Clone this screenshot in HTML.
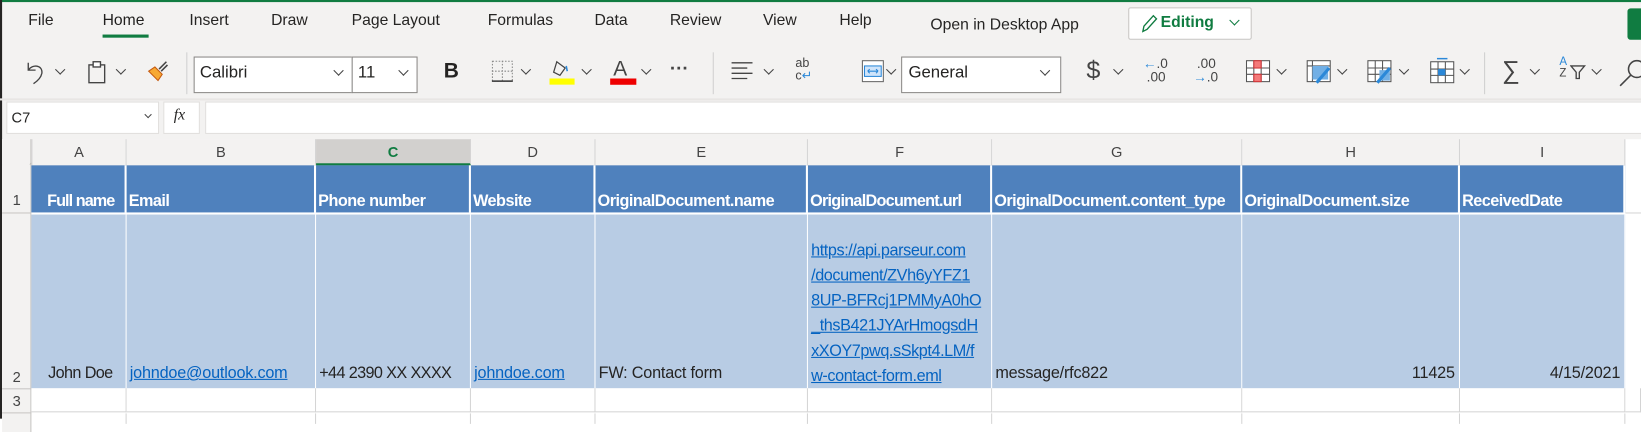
<!DOCTYPE html>
<html><head><meta charset="utf-8"><style>
*{margin:0;padding:0;box-sizing:border-box}
html,body{width:1641px;height:417px;overflow:hidden;background:#fff}
#w{position:absolute;left:0;top:0;width:1568px;height:400px;transform:scale(1.0466);transform-origin:0 0;font-family:"Liberation Sans",sans-serif;color:#252423;background:#f3f2f1}
.a{position:absolute;white-space:nowrap}
.tab{position:absolute;top:11px;font-size:15px;color:#252423}
.chev{position:absolute;width:7px;height:7px;border-right:1.3px solid #444;border-bottom:1.3px solid #444;transform:rotate(45deg)}
.sep{position:absolute;top:50px;width:1px;height:40px;background:#d0d0d0}
.box{position:absolute;background:#fff;border:1px solid #8a8886}
.ch{position:absolute;top:133px;height:25px;font-size:14px;color:#444;text-align:center;line-height:25px;border-right:1px solid #d4d4d4;background:#f3f2f1}
.hd{position:absolute;top:158px;height:45px;background:#4f81bd;color:#fff;font-weight:bold;font-size:15.5px;letter-spacing:-0.5px;padding:0 2px;line-height:70px;overflow:hidden;border-right:2px solid #fff}
.dc{position:absolute;top:205px;height:166px;background:#b8cce4;border-right:1px solid #fff;font-size:15.5px;letter-spacing:-0.2px;padding:0 3px}
.lnk{color:#0563c1;text-decoration:underline}
.r3{position:absolute;top:371px;height:23px;border-right:1px solid #d4d4d4;border-bottom:1px solid #d4d4d4;background:#fff}
.vl{position:absolute;top:395px;width:1px;height:10px;background:#d4d4d4}
</style></head><body><div id="w">
<div class="a" style="left:0;top:0;width:1568px;height:2px;background:#107c41"></div>
<div class="a" style="left:0;top:0;width:2px;height:400px;background:#252423"></div>
<div class="tab" style="left:27px">File</div>
<div class="tab" style="left:98px;color:#201f1e">Home</div>
<div class="a" style="left:98px;top:33px;width:44px;height:3px;background:#107c41"></div>
<div class="tab" style="left:181px">Insert</div>
<div class="tab" style="left:259px">Draw</div>
<div class="tab" style="left:336px">Page Layout</div>
<div class="tab" style="left:466px">Formulas</div>
<div class="tab" style="left:568px">Data</div>
<div class="tab" style="left:640px">Review</div>
<div class="tab" style="left:729px">View</div>
<div class="tab" style="left:802px">Help</div>
<div class="tab" style="left:889px;top:15px">Open in Desktop App</div>
<div class="a" style="left:1078px;top:7px;width:118px;height:31px;background:#fff;border:1px solid #c8c6c4;border-radius:2px"></div>
<svg class="a" style="left:1089px;top:13px" width="18" height="20"><path d="M3 17 L4 12 L13 2 L16 5 L7 15 Z M3 17 L7 15" fill="none" stroke="#107c41" stroke-width="1.3"/></svg>
<div class="a" style="left:1109px;top:13px;font-size:15px;font-weight:bold;color:#107c41">Editing</div>
<div class="chev" style="left:1176px;top:16px;border-color:#107c41"></div>
<div class="a" style="left:1555px;top:8px;width:90px;height:30px;background:#107c41;border-radius:3px"></div>

<svg class="a" style="left:22px;top:56px" width="24" height="26"><path d="M5 4 V11 H12 M5 11 C9 5 19 6 18 14 C17 19 13 22 10 24" fill="none" stroke="#444" stroke-width="1.3"/></svg>
<div class="chev" style="left:54px;top:63px"></div>
<svg class="a" style="left:83px;top:57px" width="20" height="24"><rect x="2" y="5" width="15" height="17" fill="none" stroke="#444" stroke-width="1.3"/><rect x="6" y="2" width="7" height="5" fill="#fff" stroke="#444" stroke-width="1.3"/></svg>
<div class="chev" style="left:112px;top:63px"></div>
<svg class="a" style="left:139px;top:56px" width="24" height="24"><path d="M3 12 L12 21 L16 15 L9 8 Z" fill="#f7a933" stroke="#c55a11"/><path d="M13 10 L20 3 M15 12 L21 6" stroke="#444" stroke-width="1.5"/></svg>
<div class="sep" style="left:178px"></div>
<div class="box" style="left:185px;top:54px;width:152px;height:35px"></div>
<div class="a" style="left:191px;top:61px;font-size:16px">Calibri</div>
<div class="chev" style="left:320px;top:64px"></div>
<div class="box" style="left:336px;top:54px;width:63px;height:35px"></div>
<div class="a" style="left:342px;top:61px;font-size:16px">11</div>
<div class="chev" style="left:382px;top:64px"></div>
<div class="a" style="left:424px;top:57px;font-size:20px;font-weight:bold">B</div>
<svg class="a" style="left:469px;top:57px" width="22" height="22"><rect x="1.5" y="1.5" width="19" height="19" fill="none" stroke="#888" stroke-dasharray="1.5 1.5"/><path d="M11 1 V21 M1 11 H21" stroke="#888" stroke-dasharray="1.5 1.5"/><path d="M1 20.5 H21" stroke="#333" stroke-width="1.5"/></svg>
<div class="chev" style="left:499px;top:63px"></div>
<svg class="a" style="left:525px;top:55px" width="26" height="26"><path d="M7 4 L4 14 L10 17 L15 10 Z" fill="none" stroke="#444" stroke-width="1.2"/><path d="M16 8 L17 13" stroke="#2b88d8" stroke-width="1.5"/><rect x="0" y="20" width="24" height="6" fill="#ffff00"/></svg>
<div class="chev" style="left:557px;top:63px"></div>
<div class="a" style="left:586px;top:55px;font-size:20px;color:#444">A</div>
<div class="a" style="left:583px;top:75px;width:25px;height:6px;background:#e00"></div>
<div class="chev" style="left:614px;top:63px"></div>
<div class="a" style="left:640px;top:55px;font-size:18px;font-weight:bold;color:#444">···</div>
<div class="sep" style="left:681px"></div>
<svg class="a" style="left:698px;top:58px" width="24" height="20"><path d="M1 2H21M1 7H16M1 12H21M1 17H16" stroke="#444" stroke-width="1.3"/></svg>
<div class="chev" style="left:731px;top:63px"></div>
<div class="a" style="left:760px;top:54px;font-size:12px;line-height:12px;color:#444">ab<br>c<span style="color:#2b88d8">↵</span></div>
<svg class="a" style="left:823px;top:57px" width="22" height="22"><rect x="1" y="1" width="20" height="20" fill="#fff" stroke="#666"/><rect x="3" y="6" width="16" height="10" fill="#cfe4fa" stroke="#2b88d8"/><path d="M6 11H16M6 11L8 9M6 11L8 13M16 11L14 9M16 11L14 13" stroke="#2b88d8"/></svg>
<div class="chev" style="left:848px;top:63px"></div>
<div class="box" style="left:861px;top:54px;width:153px;height:35px"></div>
<div class="a" style="left:868px;top:61px;font-size:16px">General</div>
<div class="chev" style="left:995px;top:64px"></div>
<div class="a" style="left:1038px;top:54px;font-size:24px;color:#444">$</div>
<div class="chev" style="left:1065px;top:63px"></div>
<div class="a" style="left:1092px;top:54px;font-size:13px;line-height:13px;color:#444"><span style="color:#2b88d8">←</span>.0<br>&nbsp;.00</div>
<div class="a" style="left:1140px;top:54px;font-size:13px;line-height:13px;color:#444">&nbsp;.00<br><span style="color:#2b88d8">→</span>.0</div>
<svg class="a" style="left:1190px;top:57px" width="24" height="22"><rect x="1" y="1" width="22" height="20" fill="#fff" stroke="#555"/><path d="M8 1V21M15 1V21M1 8H23M1 14H23" stroke="#555"/><rect x="8" y="1" width="7" height="7" fill="#f47a7a" stroke="#d13438"/><rect x="8" y="14" width="7" height="7" fill="#f47a7a" stroke="#d13438"/></svg>
<div class="chev" style="left:1221px;top:63px"></div>
<svg class="a" style="left:1248px;top:57px" width="26" height="24"><rect x="1" y="1" width="22" height="20" fill="#fff" stroke="#555"/><path d="M1 6H23M6 1V21" stroke="#555"/><rect x="6" y="6" width="15" height="13" fill="#71afe5"/><path d="M10 22 L22 8" stroke="#2b88d8" stroke-width="3"/></svg>
<div class="chev" style="left:1279px;top:63px"></div>
<svg class="a" style="left:1306px;top:57px" width="26" height="24"><rect x="1" y="1" width="22" height="20" fill="#fff" stroke="#555"/><path d="M8 1V21M15 1V21M1 8H23M1 14H23" stroke="#555"/><rect x="12" y="10" width="10" height="10" fill="#71afe5"/><path d="M10 22 L22 8" stroke="#2b88d8" stroke-width="3"/></svg>
<div class="chev" style="left:1338px;top:63px"></div>
<svg class="a" style="left:1366px;top:55px" width="24" height="26"><rect x="1" y="4" width="22" height="20" fill="#fff" stroke="#555"/><path d="M8 4V24M15 4V24M1 11H23M1 17H23" stroke="#555"/><rect x="8" y="11" width="7" height="6" fill="#2b88d8"/><path d="M7 1H17" stroke="#2b88d8" stroke-width="1.5"/></svg>
<div class="chev" style="left:1396px;top:63px"></div>
<div class="sep" style="left:1418px"></div>
<div class="a" style="left:1435px;top:54px;font-size:24px;color:#444">∑</div>
<div class="chev" style="left:1463px;top:63px"></div>
<div class="a" style="left:1490px;top:54px;font-size:11px;line-height:11px;color:#444"><span style="color:#2b88d8">A</span><br>Z</div>
<svg class="a" style="left:1500px;top:61px" width="16" height="16"><path d="M1 2H14L9 8V14H6V8Z" fill="none" stroke="#444" stroke-width="1.3"/></svg>
<div class="chev" style="left:1522px;top:63px"></div>
<svg class="a" style="left:1544px;top:54px" width="30" height="30"><circle cx="20" cy="12" r="8" fill="none" stroke="#444" stroke-width="1.5"/><path d="M14 18 L4 28" stroke="#444" stroke-width="1.5"/></svg>

<div class="a" style="left:0;top:94px;width:1568px;height:2px;background:#e8e6e4"></div>
<div class="a" style="left:6px;top:97px;width:146px;height:31px;background:#fff;border:1px solid #e1dfdd"></div>
<div class="a" style="left:11px;top:104px;font-size:14px">C7</div>
<div class="chev" style="left:139px;top:107px;width:5px;height:5px"></div>
<div class="a" style="left:156px;top:97px;width:35px;height:31px;background:#fff;border:1px solid #e1dfdd"></div>
<div class="a" style="left:166px;top:102px;font-size:15px;font-style:italic;font-family:'Liberation Serif',serif">fx</div>
<div class="a" style="left:196px;top:97px;width:1380px;height:31px;background:#fff;border:1px solid #e1dfdd"></div>

<div class="a" style="left:2px;top:133px;width:1566px;height:280px;background:#fff"></div>
<div class="a" style="left:2px;top:133px;width:1551px;height:25px;background:#f3f2f1;border-bottom:1px solid #c8c6c4"></div>
<div class="a" style="left:2px;top:133px;width:28px;height:280px;background:#f3f2f1;border-right:1px solid #c8c6c4"></div>
<svg class="a" style="left:25px;top:143px" width="20" height="15"><path d="M18 1 V14 H3 Z" fill="#b3b0ad"/></svg>
<div class="ch" style="left:30px;width:91px;border-left:1px solid #d4d4d4">A</div>
<div class="ch" style="left:121px;width:181px">B</div>
<div class="ch" style="left:302px;width:148px;background:#d2d0ce;color:#107c41;font-weight:bold;border-bottom:2px solid #107c41">C</div>
<div class="ch" style="left:450px;width:119px">D</div>
<div class="ch" style="left:569px;width:203px">E</div>
<div class="ch" style="left:772px;width:176px">F</div>
<div class="ch" style="left:948px;width:239px">G</div>
<div class="ch" style="left:1187px;width:208px">H</div>
<div class="ch" style="left:1395px;width:158px">I</div>
<div class="a" style="left:2px;top:183px;width:28px;font-size:14px;text-align:center;color:#444">1</div>
<div class="a" style="left:2px;top:352px;width:28px;font-size:14px;text-align:center;color:#444">2</div>
<div class="a" style="left:2px;top:375px;width:28px;font-size:14px;text-align:center;color:#444">3</div>
<div class="a" style="left:2px;top:203px;width:28px;height:1px;background:#c8c6c4"></div>
<div class="a" style="left:2px;top:371px;width:28px;height:1px;background:#c8c6c4"></div>
<div class="a" style="left:2px;top:394px;width:28px;height:1px;background:#c8c6c4"></div>

<div class="hd" style="left:30px;width:91px;padding-left:15px;letter-spacing:-0.9px">Full name</div>
<div class="hd" style="left:121px;width:181px">Email</div>
<div class="hd" style="left:302px;width:148px">Phone number</div>
<div class="hd" style="left:450px;width:119px">Website</div>
<div class="hd" style="left:569px;width:203px">OriginalDocument.name</div>
<div class="hd" style="left:772px;width:176px;letter-spacing:-0.7px">OriginalDocument.url</div>
<div class="hd" style="left:948px;width:239px">OriginalDocument.content_type</div>
<div class="hd" style="left:1187px;width:208px">OriginalDocument.size</div>
<div class="hd" style="left:1395px;width:158px">ReceivedDate</div>
<div class="a" style="left:30px;top:203px;width:1523px;height:2px;background:#fff"></div>
<div class="a" style="left:1553px;top:203px;width:15px;height:1px;background:#d4d4d4"></div>

<div class="dc" style="left:30px;width:91px;padding-left:16px;letter-spacing:-0.6px"><div class="a" style="top:143px">John Doe</div></div>
<div class="dc" style="left:121px;width:181px"><div class="a lnk" style="top:143px">johndoe@outlook.com</div></div>
<div class="dc" style="left:302px;width:148px;letter-spacing:-0.6px"><div class="a" style="top:143px">+44 2390 XX XXXX</div></div>
<div class="dc" style="left:450px;width:119px"><div class="a lnk" style="top:143px">johndoe.com</div></div>
<div class="dc" style="left:569px;width:203px"><div class="a" style="top:143px">FW: Contact form</div></div>
<div class="dc" style="left:772px;width:176px"><div class="a lnk" style="top:23px;line-height:24px;letter-spacing:-0.4px">https://api.parseur.com<br>/document/ZVh6yYFZ1<br>8UP-BFRcj1PMMyA0hO<br>_thsB421JYArHmogsdH<br>xXOY7pwq.sSkpt4.LM/f<br>w-contact-form.eml</div></div>
<div class="dc" style="left:948px;width:239px"><div class="a" style="top:143px">message/rfc822</div></div>
<div class="dc" style="left:1187px;width:208px"><div class="a" style="top:143px;right:4px">11425</div></div>
<div class="dc" style="left:1395px;width:158px"><div class="a" style="top:143px;right:4px">4/15/2021</div></div>

<div class="r3" style="left:30px;width:91px"></div>
<div class="r3" style="left:121px;width:181px"></div>
<div class="r3" style="left:302px;width:148px"></div>
<div class="r3" style="left:450px;width:119px"></div>
<div class="r3" style="left:569px;width:203px"></div>
<div class="r3" style="left:772px;width:176px"></div>
<div class="r3" style="left:948px;width:239px"></div>
<div class="r3" style="left:1187px;width:208px"></div>
<div class="r3" style="left:1395px;width:158px"></div>
<div class="r3" style="left:1553px;width:15px"></div>
<div class="vl" style="left:120px"></div><div class="vl" style="left:301px"></div><div class="vl" style="left:449px"></div><div class="vl" style="left:568px"></div><div class="vl" style="left:771px"></div><div class="vl" style="left:947px"></div><div class="vl" style="left:1186px"></div><div class="vl" style="left:1394px"></div><div class="vl" style="left:1552px"></div>
</div></body></html>
